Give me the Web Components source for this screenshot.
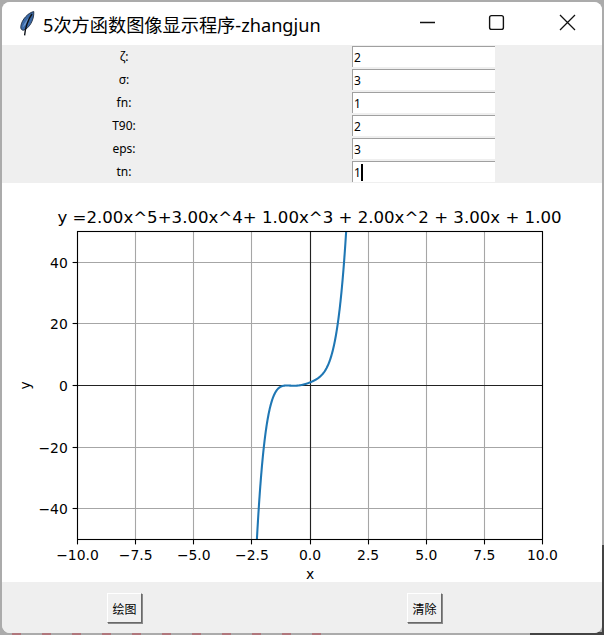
<!DOCTYPE html>
<html>
<head>
<meta charset="utf-8">
<title>5次方函数图像显示程序-zhangjun</title>
<style>
  html, body { margin: 0; height: 100%; overflow: hidden; }
  body {
    background:
      linear-gradient(#444, #444) right bottom / 74px 3px no-repeat,
      linear-gradient(#444, #444) right bottom / 2px 90px no-repeat,
      repeating-linear-gradient(90deg, #b0777c 0 9px, transparent 9px 30px) 12px bottom / 320px 2px no-repeat,
      #ababab;
  }
</style>
</head>
<body>
<app-window>
  <title-bar slot="title">5次方函数图像显示程序-zhangjun</title-bar>
  <param-row label="ζ:" value="2"></param-row>
  <param-row label="σ:" value="3"></param-row>
  <param-row label="fn:" value="1"></param-row>
  <param-row label="T90:" value="2"></param-row>
  <param-row label="eps:" value="3"></param-row>
  <param-row label="tn:" value="1" caret></param-row>
  <plot-canvas slot="plot"></plot-canvas>
  <tk-button slot="actions">绘图</tk-button>
  <tk-button slot="actions">清除</tk-button>
</app-window>

<script>
(function () {
  const FONT = '"Noto Sans", "Noto Sans CJK SC", sans-serif'

  class AppWindow extends HTMLElement {
    constructor () {
      super()
      this.attachShadow({mode: 'open'}).innerHTML = `<style>
        :host {
          display: flex;
          flex-direction: column;
          box-sizing: border-box;
          width: 600px;
          height: 631px;
          margin: 2px 0 0 2px;
          border-radius: 8px;
          overflow: hidden;
          background: #f0f0f0;
          color: #000;
          font-family: ${FONT};
        }
        .form { display: flex; flex-direction: column; height: 138px; background: #efefef; }
        .actions {
          flex: 1;
          display: flex;
          gap: 265px;
          padding: 11px 0 0 105px;
          background: #efefef;
        }
      </style>
      <slot name="title"></slot>
      <div class="form"><slot></slot></div>
      <slot name="plot"></slot>
      <div class="actions"><slot name="actions"></slot></div>`
    }
  }

  class TitleBar extends HTMLElement {
    constructor () {
      super()
      this.attachShadow({mode: 'open'}).innerHTML = `<style>
        :host {
          display: flex;
          align-items: center;
          height: 43px;
          background: #fff;
          font-size: 18.2px;
        }
        .feather { width: 18px; height: 26px; margin: 0 7px 0 16px; flex: none; }
        .text { flex: 1; white-space: nowrap; }
        .ctl { width: 70px; height: 43px; flex: none; display: block; }
      </style>
      <svg class="feather" viewBox="16 9 18 26">
        <path d="M31.8 9.6C26.5 10.5 19.6 17.5 18.8 24.4C18.5 27 19.8 28.4 21.6 28.2C27 26.4 32.2 18.5 31.8 9.6Z" fill="#3a69a6" stroke="#1f2c40" stroke-width=".9"/>
        <path d="M29.6 13.5C26 16 22 21 20.6 25.5C24 22.5 28 18 29.6 13.5Z" fill="#6c98cf"/>
        <path d="M30 12C26.5 17 23.6 23 22.6 33.4" fill="none" stroke="#0c1016" stroke-width="1.4"/>
      </svg>
      <span class="text"><slot></slot></span>
      <svg class="ctl" viewBox="0 0 70 43"><path d="M28 20.5H43" stroke="#111" stroke-width="1.3"/></svg>
      <svg class="ctl" viewBox="0 0 70 43"><rect x="27.6" y="13.6" width="13.8" height="13.8" rx="2" fill="none" stroke="#111" stroke-width="1.4"/></svg>
      <svg class="ctl" viewBox="0 0 70 43"><path d="M28 13L43 28M43 13L28 28" fill="none" stroke="#111" stroke-width="1.3"/></svg>`
    }
  }

  class ParamRow extends HTMLElement {
    constructor () {
      super()
      this.attachShadow({mode: 'open'})
    }

    connectedCallback () {
      const caret = this.hasAttribute('caret') ? '<i class="caret"></i>' : ''
      this.shadowRoot.innerHTML = `<style>
        :host {
          display: grid;
          grid-template-columns: 244px 106px 143px;
          align-items: center;
          height: 23px;
          font-size: 12px;
        }
        .label { grid-column: 1; text-align: center; }
        .entry {
          grid-column: 3;
          box-sizing: border-box;
          display: flex;
          align-items: center;
          height: 21px;
          padding-left: 1px;
          background: #fff;
          border-top: 1px solid #a0a0a0;
          border-left: 1px solid #a0a0a0;
        }
        .caret { display: block; width: 2px; height: 17px; margin-left: 0; background: #000; }
      </style>
      <span class="label">${this.getAttribute('label')}</span>
      <span class="entry"><span>${this.getAttribute('value')}</span>${caret}</span>`
    }
  }

  class PlotCanvas extends HTMLElement {
    constructor () {
      super()
      this.attachShadow({mode: 'open'})
    }

    connectedCallback () {
      // axes box in page pixels, same numbers the reference plot lands on
      const left = 77.5
      const right = 542.5
      const top = 231.5
      const bottom = 539.5
      const sx = x => (left + right) / 2 + x * (right - left) / 20
      const sy = y => (top + bottom) / 2 - y * (bottom - top) / 100
      // matplotlib snaps its straight lines to whole pixels
      const snap = v => Math.floor(v) + 0.5
      const f = x => 2 * x ** 5 + 3 * x ** 4 + x ** 3 + 2 * x ** 2 + 3 * x + 1

      let grid = ''
      let ticks = ''
      for (let i = -4; i <= 4; i++) {
        const v = i * 2.5
        const x = snap(sx(v))
        grid += `<line x1="${x}" x2="${x}" y1="${top}" y2="${bottom}"/>`
        ticks += `<line x1="${x}" x2="${x}" y1="${bottom}" y2="${bottom + 4.9}"/>`
        ticks += `<text x="${sx(v)}" y="560" text-anchor="middle" stroke="none">${(v < 0 ? '\u2212' : '') + Math.abs(v).toFixed(1)}</text>`
      }
      for (let i = -2; i <= 2; i++) {
        const v = i * 20
        const y = snap(sy(v))
        grid += `<line x1="${left}" x2="${right}" y1="${y}" y2="${y}"/>`
        ticks += `<line x1="${left - 4.9}" x2="${left}" y1="${y}" y2="${y}"/>`
        ticks += `<text x="67.8" y="${y + 5}" text-anchor="end" stroke="none">${(v < 0 ? '\u2212' : '') + Math.abs(v)}</text>`
      }

      const points = []
      for (let x = -10; x <= 10; x += 0.01) {
        const y = Math.max(-500, Math.min(500, f(x)))
        points.push(sx(x).toFixed(2) + ',' + sy(y).toFixed(2))
      }

      this.shadowRoot.innerHTML = `<style>
        :host { display: block; height: 399px; background: #fff; }
        svg { display: block; font-family: "DejaVu Sans", sans-serif; font-size: 13.9px; }
        .grid line { stroke: #a6a6a6; stroke-width: 1.1; }
        .ticks line { stroke: #000; stroke-width: 1.1; }
        .ticks text { fill: #000; }
        .zero { stroke: #222; stroke-width: 1.1; }
        .curve { fill: none; stroke: #1f77b4; stroke-width: 2.08; stroke-linejoin: round; }
      </style>
      <svg width="600" height="399" viewBox="2 183 600 399">
        <defs><clipPath id="axes"><rect x="${left}" y="${top}" width="${right - left}" height="${bottom - top}"/></clipPath></defs>
        <g class="grid">${grid}</g>
        <line class="zero" x1="${left}" x2="${right}" y1="${snap(sy(0))}" y2="${snap(sy(0))}"/>
        <line class="zero" x1="${snap(sx(0))}" x2="${snap(sx(0))}" y1="${top}" y2="${bottom}"/>
        <polyline class="curve" clip-path="url(#axes)" points="${points.join(' ')}"/>
        <rect x="${left}" y="${top}" width="${right - left}" height="${bottom - top}" fill="none" stroke="#000" stroke-width="1.1"/>
        <g class="ticks">${ticks}</g>
        <text x="309.5" y="223" text-anchor="middle" font-size="16.6">y =2.00x^5+3.00x^4+ 1.00x^3 + 2.00x^2 + 3.00x + 1.00</text>
        <text x="310" y="579" text-anchor="middle">x</text>
        <text transform="translate(30 385.5) rotate(-90)" text-anchor="middle">y</text>
      </svg>`
    }
  }

  class TkButton extends HTMLElement {
    constructor () {
      super()
      this.attachShadow({mode: 'open'}).innerHTML = `<style>
        :host {
          box-sizing: border-box;
          display: flex;
          align-items: center;
          justify-content: center;
          width: 35px;
          height: 30px;
          background: #f0f0f0;
          font-size: 12px;
          font-family: "Noto Sans CJK SC", sans-serif;
          border: 1px solid;
          border-color: #fff #696969 #696969 #fff;
          box-shadow: 1px 1px 0 #8a8a8a;
        }
      </style><slot></slot>`
    }
  }

  window.customElements.define('app-window', AppWindow)
  window.customElements.define('title-bar', TitleBar)
  window.customElements.define('param-row', ParamRow)
  window.customElements.define('plot-canvas', PlotCanvas)
  window.customElements.define('tk-button', TkButton)
})()
</script>
</body>
</html>
